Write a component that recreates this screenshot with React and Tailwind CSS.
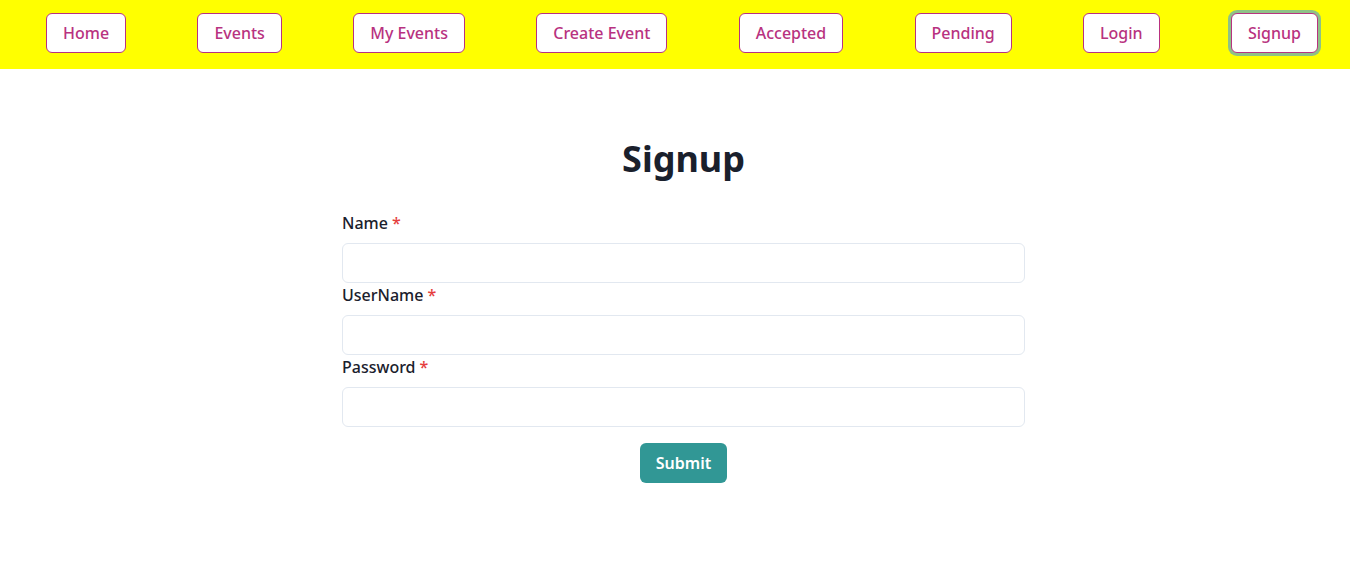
import React from 'react';

const links = ['Home', 'Events', 'My Events', 'Create Event', 'Accepted', 'Pending', 'Login', 'Signup'];

const Field = ({ label, type = 'text' }) => (
  <div>
    <label className="block mb-2 h-6 leading-6 text-base font-medium text-[#1a202c]">
      {label}
      <span className="ml-1 text-[#e53e3e]">*</span>
    </label>
    <input
      type={type}
      className="block w-full h-10 px-4 rounded-md border border-[#e2e8f0] bg-white outline-none"
    />
  </div>
);

const App = () => {
  return (
    <div className="min-h-[574px] bg-white" style={{ fontFamily: '"Noto Sans", "Open Sans", sans-serif' }}>
      <nav className="h-[69px] bg-[#ffff00] flex items-start justify-between pt-[13px] pl-[46px] pr-[32px]">
        {links.map((l) => (
          <button
            key={l}
            className={
              'h-10 px-4 rounded-md border border-[#b83280] bg-white text-[#b83280] text-base font-medium ' +
              (l === 'Signup' ? 'shadow-[0_0_0_3px_rgba(66,153,225,0.6)]' : '')
            }
          >
            {l}
          </button>
        ))}
      </nav>

      <div className="ml-[342px] w-[683px] pt-[68px]">
        <h1 className="text-center text-[36px] leading-[44px] font-bold text-[#1a202c] mb-[30px]">Signup</h1>
        <form className="flex flex-col" onSubmit={(e) => e.preventDefault()}>
          <Field label="Name" />
          <Field label="UserName" />
          <Field label="Password" type="password" />
          <div className="flex justify-center mt-4">
            <button className="h-10 px-4 rounded-md bg-[#319795] text-white text-base font-semibold">Submit</button>
          </div>
        </form>
      </div>
    </div>
  );
};

export default App;
